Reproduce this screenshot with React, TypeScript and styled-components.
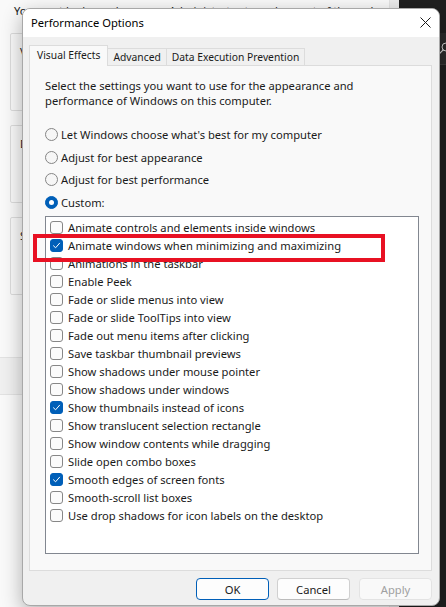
import React from "react";
import styled, { createGlobalStyle } from "styled-components";

const GlobalStyle = createGlobalStyle`
  html, body { margin: 0; padding: 0; width: 446px; height: 607px; overflow: hidden; }
  body {
    font-family: "Noto Sans", "Liberation Sans", sans-serif;
    font-size: 11.2px;
    color: #1a1a1a;
  }
  * { box-sizing: border-box; }
`;

const Screen = styled.div`
  position: relative;
  width: 446px;
  height: 607px;
  display: flex;
  overflow: hidden;
  background: #202020;
`;

/* ---------- window behind the dialog ---------- */
const BackWindow = styled.div`
  width: 390px;
  flex: none;
  display: flex;
  flex-direction: column;
  background: #f9f9f9;
  border-right: 1px solid #e3e3e3;
`;

const BackContent = styled.div`
  display: flex;
  flex-direction: column;
  gap: 6px;
  padding: 3px 10px 0 10px;
`;

const Notice = styled.div`
  line-height: 16px;
  padding-left: 4px;
  white-space: nowrap;
`;

const GroupBox = styled.fieldset`
  margin: 0;
  height: 86px;
  padding: 3px 9px 0 9px;
  border: 1px solid #dcdcdc;
  border-radius: 2px;
`;

const GroupLegend = styled.legend`
  padding: 0 1px;
  margin-left: 7px;
  line-height: 16px;
`;

const GroupText = styled.div`
  line-height: 16px;
  white-space: nowrap;
`;

const BackButtonBand = styled.div`
  margin-top: 62px;
  height: 38px;
  background: #f0f0f0;
  border-top: 1px solid #e2e2e2;
  border-bottom: 1px solid #e2e2e2;
`;

const Strip = styled.div`
  width: 9px;
  flex: none;
  background: #ececec;
`;

const DarkPane = styled.div`
  flex: 1;
  display: flex;
  flex-direction: column;
  background: #1f1f1f;
`;

const SearchRow = styled.div`
  margin-top: 33px;
  height: 32px;
  display: flex;
  align-items: center;
  padding-left: 40px;
  background: #2b2b2b;
  border-bottom: 1px solid #3a3a3a;
`;

/* ---------- dialog ---------- */
const Dialog = styled.div`
  position: absolute;
  left: 22px;
  top: 8px;
  width: 418px;
  height: 598px;
  display: flex;
  flex-direction: column;
  background: #f0f0f0;
  border: 1px solid #a8a8a8;
  border-radius: 8px;
  overflow: hidden;
  box-shadow: 0 6px 20px rgba(0, 0, 0, 0.3);
`;

const TitleBar = styled.div`
  height: 28px;
  flex: none;
  display: flex;
  align-items: center;
  justify-content: space-between;
  padding-left: 8px;
  padding-bottom: 1px;
  background: #ffffff;
`;

const TitleText = styled.span`
  font-size: 11.2px;
  color: #000;
`;

const CloseBox = styled.div`
  width: 28px;
  height: 28px;
  display: flex;
  align-items: center;
  justify-content: center;
`;

const Body = styled.div`
  flex: 1;
  display: flex;
  flex-direction: column;
  padding: 8px 7px 0 6px;
`;

const TabStrip = styled.div`
  height: 21px;
  flex: none;
  display: flex;
  align-items: flex-end;
  margin-bottom: -1px;
  position: relative;
  z-index: 1;
`;

const Tab = styled.div<{ $active?: boolean }>`
  height: ${(p) => (p.$active ? "21px" : "18px")};
  display: flex;
  align-items: center;
  font-size: 10.3px;
  padding: ${(p) => (p.$active ? "0 7px 2px 7px" : "0 5px 0 5px")};
  background: ${(p) => (p.$active ? "#f9f9f9" : "#f0f0f0")};
  border: 1px solid #dcdcdc;
  border-bottom: ${(p) => (p.$active ? "none" : "1px solid #dcdcdc")};
  white-space: nowrap;
  & + & { margin-left: -1px; }
  &:nth-child(2) { margin-left: 0; border-left: none; }
`;

const Panel = styled.div`
  flex: 1;
  display: flex;
  flex-direction: column;
  padding: 12px 11px 0 15px;
  background: #f9f9f9;
  border: 1px solid #dcdcdc;
`;

const Description = styled.p`
  margin: 0;
  line-height: 15px;
`;

const RadioList = styled.div`
  margin-top: 15.5px;
  display: flex;
  flex-direction: column;
`;

const RadioRow = styled.label`
  height: 22.5px;
  display: flex;
  align-items: center;
  gap: 3px;
`;

const RadioDot = styled.span<{ $checked?: boolean }>`
  width: 13px;
  height: 13px;
  flex: none;
  border-radius: 50%;
  display: flex;
  align-items: center;
  justify-content: center;
  background: ${(p) => (p.$checked ? "#005fb8" : "#f6f6f6")};
  border: 1px solid ${(p) => (p.$checked ? "#005fb8" : "#858585")};
  &::after {
    content: "";
    display: ${(p) => (p.$checked ? "block" : "none")};
    width: 5px;
    height: 5px;
    border-radius: 50%;
    background: #ffffff;
  }
`;

const ListBox = styled.div`
  margin-top: 2.5px;
  width: 374px;
  height: 338px;
  padding-top: 1px;
  display: flex;
  flex-direction: column;
  background: #ffffff;
  border: 1px solid #828790;
`;

const CheckRow = styled.label`
  height: 18px;
  flex: none;
  display: flex;
  align-items: center;
  gap: 5px;
  padding-left: 4px;
  white-space: nowrap;
`;

const CheckBox = styled.span<{ $checked?: boolean }>`
  width: 13px;
  height: 13px;
  flex: none;
  display: flex;
  align-items: center;
  justify-content: center;
  border-radius: 3px;
  background: ${(p) => (p.$checked ? "#005fb8" : "#fbfbfb")};
  border: 1px solid ${(p) => (p.$checked ? "#005fb8" : "#878787")};
`;

const Footer = styled.div`
  height: 34px;
  flex: none;
  display: flex;
  justify-content: flex-end;
  align-items: flex-start;
  gap: 8px;
  padding-top: 7px;
`;

const Button = styled.button<{ $primary?: boolean }>`
  width: 73px;
  height: 22px;
  padding: 0;
  font-family: inherit;
  font-size: 11.2px;
  color: ${(p) => (p.disabled ? "#a0a0a0" : "#1a1a1a")};
  background: ${(p) => (p.disabled ? "#f9f9f9" : "#fdfdfd")};
  border: 1px solid
    ${(p) => (p.$primary ? "#005fb8" : p.disabled ? "#e3e3e3" : "#d0d0d0")};
  border-bottom-color: ${(p) =>
    p.$primary ? "#005fb8" : p.disabled ? "#e3e3e3" : "#bcbcbc"};
  border-radius: 4px;
  &:last-child { margin-left: 1px; }
`;

const Highlight = styled.div`
  position: absolute;
  left: 33px;
  top: 234px;
  width: 352px;
  height: 28px;
  border: 4px solid #e81123;
  pointer-events: none;
`;

const CloseIcon = () => (
  <svg width="11" height="11" viewBox="0 0 11 11">
    <path d="M0.5 0.5 L10.5 10.5 M10.5 0.5 L0.5 10.5" stroke="#1a1a1a" strokeWidth="1" fill="none" />
  </svg>
);

const CheckMark = () => (
  <svg width="9" height="9" viewBox="0 0 9 9">
    <path d="M1.5 4.8 L3.6 6.8 L7.6 2.2" stroke="#ffffff" strokeWidth="1" fill="none" strokeLinecap="round" strokeLinejoin="round" />
  </svg>
);

const SearchIcon = () => (
  <svg width="12" height="13" viewBox="0 0 12 13">
    <circle cx="7" cy="5" r="4" stroke="#d0d0d0" strokeWidth="1" fill="none" />
    <path d="M4.2 7.9 L0.8 11.3" stroke="#d0d0d0" strokeWidth="1.2" strokeLinecap="round" />
  </svg>
);

const radios = [
  { label: "Let Windows choose what's best for my computer", checked: false },
  { label: "Adjust for best appearance", checked: false },
  { label: "Adjust for best performance", checked: false },
  { label: "Custom:", checked: true },
];

const options = [
  { label: "Animate controls and elements inside windows", checked: false },
  { label: "Animate windows when minimizing and maximizing", checked: true },
  { label: "Animations in the taskbar", checked: false },
  { label: "Enable Peek", checked: false },
  { label: "Fade or slide menus into view", checked: false },
  { label: "Fade or slide ToolTips into view", checked: false },
  { label: "Fade out menu items after clicking", checked: false },
  { label: "Save taskbar thumbnail previews", checked: false },
  { label: "Show shadows under mouse pointer", checked: false },
  { label: "Show shadows under windows", checked: false },
  { label: "Show thumbnails instead of icons", checked: true },
  { label: "Show translucent selection rectangle", checked: false },
  { label: "Show window contents while dragging", checked: false },
  { label: "Slide open combo boxes", checked: false },
  { label: "Smooth edges of screen fonts", checked: true },
  { label: "Smooth-scroll list boxes", checked: false },
  { label: "Use drop shadows for icon labels on the desktop", checked: false },
];

export default function App() {
  return (
    <>
      <GlobalStyle />
      <Screen>
        <BackWindow>
          <BackContent>
            <Notice>You must be logged on as an Administrator to make most of these changes.</Notice>
            <GroupBox>
              <GroupLegend>Performance</GroupLegend>
              <GroupText>Visual effects, processor scheduling, memory usage</GroupText>
            </GroupBox>
            <GroupBox>
              <GroupLegend>User Profiles</GroupLegend>
              <GroupText>Desktop settings related to your sign-in</GroupText>
            </GroupBox>
            <GroupBox>
              <GroupLegend>Startup and Recovery</GroupLegend>
              <GroupText>System startup, system failure, and debugging</GroupText>
            </GroupBox>
          </BackContent>
          <BackButtonBand />
        </BackWindow>
        <Strip />
        <DarkPane>
          <SearchRow>
            <SearchIcon />
          </SearchRow>
        </DarkPane>

        <Dialog>
          <TitleBar>
            <TitleText>Performance Options</TitleText>
            <CloseBox>
              <CloseIcon />
            </CloseBox>
          </TitleBar>
          <Body>
            <TabStrip>
              <Tab $active>Visual Effects</Tab>
              <Tab>Advanced</Tab>
              <Tab>Data Execution Prevention</Tab>
            </TabStrip>
            <Panel>
              <Description>
                Select the settings you want to use for the appearance and
                <br />
                performance of Windows on this computer.
              </Description>
              <RadioList>
                {radios.map((r) => (
                  <RadioRow key={r.label}>
                    <RadioDot $checked={r.checked} />
                    {r.label}
                  </RadioRow>
                ))}
              </RadioList>
              <ListBox>
                {options.map((o) => (
                  <CheckRow key={o.label}>
                    <CheckBox $checked={o.checked}>{o.checked && <CheckMark />}</CheckBox>
                    {o.label}
                  </CheckRow>
                ))}
              </ListBox>
            </Panel>
            <Footer>
              <Button $primary>OK</Button>
              <Button>Cancel</Button>
              <Button disabled>Apply</Button>
            </Footer>
          </Body>
        </Dialog>
        <Highlight />
      </Screen>
    </>
  );
}
